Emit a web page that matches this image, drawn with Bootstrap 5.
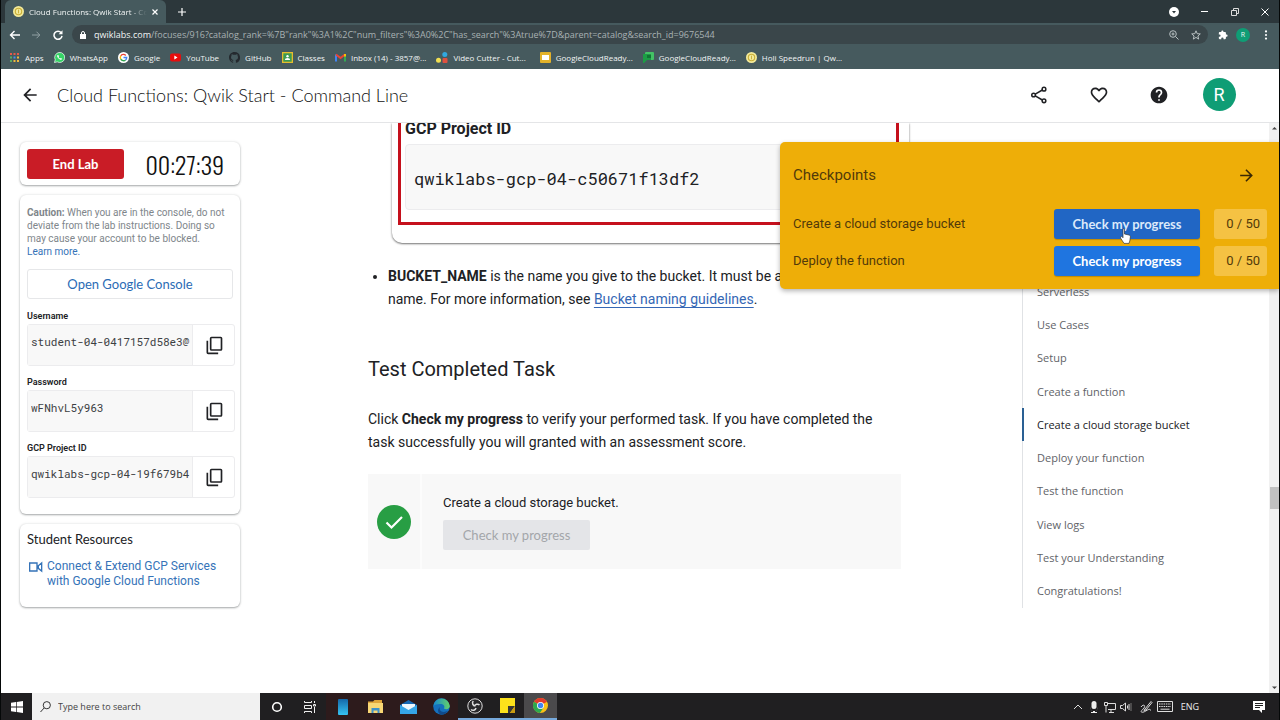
<!DOCTYPE html>
<html lang="en">
<head>
<meta charset="utf-8">
<meta name="viewport" content="width=device-width, initial-scale=1">
<title>Cloud Functions: Qwik Start - Command Line</title>
<link href="https://cdn.jsdelivr.net/npm/bootstrap@5.3.0/dist/css/bootstrap.min.css" rel="stylesheet">
<style>
:root{--ui:"Open Sans","Noto Sans",sans-serif;--brand:Lato,"Open Sans",sans-serif;--mono:"Roboto Mono","Liberation Mono",monospace}
body{font-family:Roboto,sans-serif;font-size:14px;color:#202124;background:#fff}
svg{display:block;flex:none}
button{border:0;background:none;padding:0;color:inherit}
.screen{border:solid #050808;border-width:0 1px}
/* browser window */
.chrome-ui{font-family:var(--ui);font-size:8px;line-height:12px;color:#f1f4f4}
.tabstrip{height:23px;background:#2c373b}
.tab{width:161px;height:23px;margin-left:4px;padding:0 8px;background:#465a5e;border-radius:6px 6px 0 0}
.tab-label{width:0;margin:0 5px;-webkit-mask-image:linear-gradient(90deg,#000 85%,transparent);mask-image:linear-gradient(90deg,#000 85%,transparent)}
.window-buttons{gap:22px;margin-right:10px}
.toolbar{height:23px;background:#465a5e;padding:0 9px 0 8px}
.omnibox{height:19px;border-radius:10px;background:#3a464a;padding:0 7px 0 8px;margin:0 10px 0 9px}
.omnibox input{font:9px/12px var(--ui);color:#a9b2b4;background:none;border:0;padding:0;min-width:0}
.omnibox .host{font-size:9px}
.bookmarks{height:23px;background:#465a5e;padding-left:8px;gap:10px}
.bookmarks a{color:#f1f4f4;gap:5px}
.pill{width:14px;height:14px;background:#0f9d75;font-size:7px}
/* page header */
.lab-header{height:54px;border-bottom:1px solid #e4e5e7;padding:0 30px 2px 19px}
.lab-header h1{font:300 18px/24px var(--brand);margin:0 0 0 17px;color:#111}
.lab-header .tool{width:60px}
.avatar{width:33px;height:33px;background:#0f9d75;font-size:18px}
/* side panels */
.side{width:220px;margin:19px 0 0 19px;gap:10px}
.panel{border-radius:6px;background:#fff;box-shadow:0 1px 2px rgba(60,64,67,.42),0 0 3px rgba(60,64,67,.14);padding:7px 7px 6px}
.end-lab{width:97px;height:30px;border-radius:3px;background:#c91c26;color:#fff;font:700 13px/16px var(--brand)}
.timer{font:300 24px/28px Oswald,"Roboto Condensed",sans-serif;color:#111;margin-right:9px}
.caution{font-size:10px;line-height:13px;color:#80868b;margin:4px 0 11px}
.blue-link{color:#3573b8;text-decoration:none}
.console-btn{height:30px;border:1px solid #e6e7e9;border-radius:3px;color:#2b6cb5;font:400 13px/16px var(--brand)}
.cred{margin-right:-2px;padding-top:3px}
.cred label{font-size:9px;line-height:12px;font-weight:600;margin-bottom:2px;display:block}
.cred-box{height:42px;border:1px solid #ececee;border-radius:3px;margin-bottom:10px}
.cred-box input{font:11px/16px var(--mono);color:#3c4043;background:#f8f8f8;border:0;border-right:1px solid #ececee;padding:0 2px 6px 3px;min-width:0}
.cred-box button{width:41px}
.resources{font-size:12px;line-height:15px;padding-bottom:18px}
.resources h2{font:400 13px/16px var(--brand);margin:0 0 12px}
/* article */
.article{width:533px;margin-left:128px}
.shot{margin:0 -8px 22px 24px;height:120px;padding:0 10px 18px 6px;border-radius:0 0 10px 10px;box-shadow:0 1px 2px rgba(0,0,0,.5),0 0 3px rgba(0,0,0,.14)}
.shot-frame{height:102px;border:solid #c5101c;border-width:0 3px 3px;padding:0 4px}
.shot-frame strong{font-size:16px;line-height:12px;height:21px;display:block}
.shot-field{height:66px;border:1px solid #ececee;border-radius:4px;background:#f8f8f8;font:17px/68px var(--mono);padding-left:8px}
.copy{line-height:23px}
.copy ul{padding-left:20px;margin-bottom:46px}
.copy h2{font-size:20px;line-height:24px;font-weight:400;margin-bottom:27px}
.copy p{margin-bottom:20px}
.copy ul a{color:#3567b5;text-underline-offset:3px;text-decoration-thickness:1px}
.task{height:95px;background:#f8f8f8;line-height:18px;font-size:13px}
.task-state{width:54px;border-right:2px solid #fcfcfc}
.task-body{padding:20px 21px 0}
.task-body .off{width:147px;height:30px;border-radius:2px;background:#e4e5e8;color:#a3a6aa;font:400 13px/16px var(--brand);margin-top:8px}
/* table of contents */
.toc{width:247px;margin-top:152px}
.toc ul{height:333px;border-left:1px solid #e0e2e5}
.toc a{color:#5f6368;font:500 11px/16px "Open Sans",sans-serif;text-decoration:none;padding-left:14px;margin-left:-1px;border-left:1px solid transparent}
.toc a.here{color:#202124;border-left:2px solid #2a6094;padding-left:13px}
.scroll{width:10px;background:#f1f1f1}
.scroll .above{flex:67}
.scroll .below{flex:33}
.scroll .thumb{height:22px;background:#c1c1c1;margin-left:1px}
/* checkpoints drawer */
.drawer{width:499px;top:19px;background:#eeae08;border-radius:5px 0 0 5px;padding:21px 12px 13px 13px;color:#523a0a;box-shadow:0 2px 5px rgba(0,0,0,.3);font-size:13px}
.drawer h2{font-size:15px;line-height:24px;margin:0}
.drawer-head{padding-right:11px;margin-bottom:22px}
.drawer li{height:30px;margin-bottom:7px}
.drawer li:last-child{margin-bottom:0}
.check{width:146px;height:30px;border-radius:3px;background:#1f75e0;color:#fff;font:700 13px/16px var(--brand);box-shadow:0 1px 1px rgba(0,0,0,.2)}
.check.hot{background:#2166c4;color:#dce9fa}
.score{width:53px;height:30px;border-radius:3px;background:#f5c243;margin-left:14px;padding-right:7px}
.hand{left:66px;top:19px}
/* taskbar */
.taskbar{height:27px;background:#201f21;font-family:var(--ui)}
.taskbar .cell{width:33px;height:27px}
.taskbar .start{width:31px}
.taskbar .running{border-bottom:2px solid #76a9dc}
.taskbar .active{background:#4b4a4c}
.find{width:228px;background:#f1f1f1;gap:7px;padding-left:8px;color:#333}
.find input{font:9px/14px var(--ui);border:0;background:none;padding:0;min-width:0}
.find input::placeholder{color:#444}
.apps{background:#2d1b1c}
.tray{gap:4px;margin-right:14px;font-size:9px;color:#eee}
.tray .notes{margin-left:50px}
</style>
</head>
<body>
<div class="screen vh-100 d-flex flex-column overflow-hidden">

<header class="chrome-ui">
  <div class="tabstrip d-flex align-items-center">
    <div class="tab d-flex align-items-center">
      <svg width="11" height="11" viewBox="0 0 12 12"><circle cx="6" cy="6" r="6" fill="#f3ea9b"/><circle cx="6" cy="6" r="3.5" fill="none" stroke="#c9ae35" stroke-width="1.2"/><path d="M6 4v4" stroke="#c9ae35"/></svg>
      <span class="tab-label flex-fill text-nowrap overflow-hidden">Cloud Functions: Qwik Start - Comm</span>
      <button aria-label="Close tab"><svg width="6" height="6" viewBox="0 0 6 6" stroke="#fff" stroke-width="1.2"><path d="M.5.5l5 5M5.5.5l-5 5"/></svg></button>
    </div>
    <button class="ms-2 ps-1" aria-label="New tab"><svg width="8" height="8" viewBox="0 0 8 8" stroke="#fff" stroke-width="1.2"><path d="M4 0v8M0 4h8"/></svg></button>
    <div class="window-buttons ms-auto d-flex align-items-center">
      <svg width="10" height="10" viewBox="0 0 10 10"><circle cx="5" cy="5" r="5" fill="#fff"/><path d="M3 4h4L5 6.5z" fill="#2c373b"/></svg>
      <button aria-label="Minimize"><svg width="8" height="8" viewBox="0 0 8 8"><path d="M0 3.500h7" stroke="#fff"/></svg></button>
      <button aria-label="Restore"><svg width="8" height="8" viewBox="0 0 8 8" fill="none" stroke="#ddd"><path d="M.5 2.500h5v5h-5zM2.500 2V.5h5v5H6"/></svg></button>
      <button aria-label="Close"><svg width="8" height="8" viewBox="0 0 8 8" stroke="#fff"><path d="M.5.5l7 7M7.500.5l-7 7"/></svg></button>
    </div>
  </div>
  <div class="toolbar d-flex align-items-center">
    <button aria-label="Back"><svg width="11" height="10" viewBox="0 0 11 10" fill="none" stroke="#fff" stroke-width="1.400"><path d="M11 5H1.500M5.500 1l-4 4 4 4"/></svg></button>
    <button class="mx-2 px-1" aria-label="Forward"><svg width="9" height="10" viewBox="0 0 11 10" fill="none" stroke="#93a1a4" stroke-width="1.200"><path d="M0 5h9.500M5.500 1l4 4-4 4"/></svg></button>
    <button aria-label="Reload"><svg width="10" height="10" viewBox="0 0 10 10"><path d="M8.200 2.800A4 4 0 1 0 9 5.800" fill="none" stroke="#fff" stroke-width="1.500"/><path d="M9.500.3v3.900H5.600z" fill="#fff"/></svg></button>
    <div class="omnibox d-flex align-items-center flex-fill">
      <svg class="me-2" width="6" height="8" viewBox="0 0 6 8"><path d="M0 3h6v5H0z" fill="#fff"/><path d="M1.500 3V2a1.500 1.500 0 0 1 3 0v1" fill="none" stroke="#fff"/></svg>
      <label class="host" for="url">qwiklabs.com</label>
      <input id="url" class="flex-fill" value="/focuses/916?catalog_rank=%7B&quot;rank&quot;%3A1%2C&quot;num_filters&quot;%3A0%2C&quot;has_search&quot;%3Atrue%7D&amp;parent=catalog&amp;search_id=9676544">
      <svg width="10" height="10" viewBox="0 0 10 10" fill="none" stroke="#b8c1c3"><circle cx="4" cy="4" r="3.300"/><path d="M6.500 6.500L9.500 9.500M2.500 4h3M4 2.500v3"/></svg>
      <svg class="ms-2 ps-1" width="14" height="10" viewBox="0 0 10 10" fill="none" stroke="#c4cccd" stroke-width=".9"><path d="M5 .8l1.200 2.900 3.100.2L6.900 6l.8 3.100L5 7.400 2.300 9.100 3.100 6 .7 3.900l3.100-.2z"/></svg>
    </div>
    <svg width="10" height="10" viewBox="0 0 24 24" fill="#fff"><path d="M20.500 11H19V7a2 2 0 0 0-2-2h-4V3.500a2.500 2.500 0 0 0-5 0V5H4a2 2 0 0 0-2 2v3.800h1.500a2.700 2.700 0 0 1 0 5.400H2V20a2 2 0 0 0 2 2h3.800v-1.500a2.700 2.700 0 0 1 5.400 0V22H17a2 2 0 0 0 2-2v-4h1.500a2.500 2.500 0 0 0 0-5z"/></svg>
    <span class="pill rounded-circle d-flex align-items-center justify-content-center mx-2">R</span>
    <svg class="ms-1" width="8" height="10" viewBox="0 0 8 10" fill="#fff"><circle cx="4" cy="1.400" r="1.100"/><circle cx="4" cy="5" r="1.100"/><circle cx="4" cy="8.600" r="1.100"/></svg>
  </div>
  <nav class="bookmarks d-flex align-items-center text-nowrap" aria-label="Bookmarks">
    <a class="d-flex align-items-center text-decoration-none" href="#"><svg width="11" height="11" viewBox="0 0 11 11"><path fill="#e8594a" d="M1 1h2v2H1zM4.500 1h2v2h-2zM8 1h2v2H8z"/><path fill="#58ad62" d="M1 4.500h2v2H1z"/><path fill="#4d8ff0" d="M4.500 4.500h2v2h-2z"/><path fill="#f0b93d" d="M8 4.500h2v2H8zM4.500 8h2v2h-2zM8 8h2v2H8z"/><path fill="#58ad62" d="M1 8h2v2H1z"/></svg>Apps</a>
    <a class="d-flex align-items-center text-decoration-none" href="#"><svg width="11" height="11" viewBox="0 0 24 24"><path d="M1 23l1.700-6A11 11 0 1 1 7 21.500z" fill="#35d366" stroke="#fff" stroke-width="1.500"/><path d="M8 6.500c-2 1.500-1.500 4 1.500 7.200s6 4.300 8 2.300l.3-1.500-3-1.500-1.300 1.400c-2-1-3-2-3.700-3.600L11 9.700 9.500 6.500z" fill="#fff"/></svg>WhatsApp</a>
    <a class="d-flex align-items-center text-decoration-none" href="#"><svg width="11" height="11" viewBox="0 0 24 24" fill="none" stroke-width="3"><circle cx="12" cy="12" r="12" fill="#fff"/><path d="M17 7.500a7 7 0 0 0-11 1" stroke="#ea4335"/><path d="M6 8.500a7 7 0 0 0 0 7" stroke="#fbbc05"/><path d="M6 15.500a7 7 0 0 0 10.500 2" stroke="#34a853"/><path d="M16.500 17.500A7 7 0 0 0 19 12h-7" stroke="#4285f4"/></svg>Google</a>
    <a class="d-flex align-items-center text-decoration-none" href="#"><svg width="11" height="11" viewBox="0 0 11 11"><rect y="1.500" width="11" height="8" rx="2" fill="#e60d0d"/><path d="M4.300 3.600v3.800L7.500 5.500z" fill="#fff"/></svg>YouTube</a>
    <a class="d-flex align-items-center text-decoration-none" href="#"><svg width="11" height="11" viewBox="0 0 16 16" fill="#24292e"><path d="M8 0C3.580 0 0 3.580 0 8c0 3.540 2.290 6.530 5.470 7.590.4.070.55-.17.55-.38v-1.490c-2.010.37-2.530-.49-2.690-.94-.09-.23-.48-.94-.82-1.130-.28-.15-.68-.52-.01-.53.63-.01 1.080.58 1.230.82.72 1.210 1.870.87 2.330.66.07-.52.28-.87.51-1.070-1.780-.2-3.640-.89-3.640-3.950 0-.87.31-1.590.82-2.150-.08-.2-.36-1.020.08-2.120 0 0 .67-.21 2.200.82a7.600 7.600 0 0 1 4 0c1.530-1.040 2.200-.82 2.200-.82.44 1.100.16 1.920.08 2.120.51.56.82 1.270.82 2.150 0 3.070-1.870 3.750-3.650 3.950.29.25.54.73.54 1.480v2.190c0 .21.15.46.55.38A8 8 0 0 0 8 0z"/></svg>GitHub</a>
    <a class="d-flex align-items-center text-decoration-none" href="#"><svg width="11" height="11" viewBox="0 0 11 11"><path fill="#e5bd2c" d="M0 0h11v11H0z"/><path fill="#3c9a50" d="M1.300 1.300h8.400v8.400H1.300z"/><circle cx="5.500" cy="4.200" r="1.200" fill="#fff"/><path d="M2.800 8a2.700 1.900 0 0 1 5.400 0z" fill="#fff"/></svg>Classes</a>
    <a class="d-flex align-items-center text-decoration-none" href="#"><svg width="11" height="11" viewBox="0 0 11 11" fill="none" stroke-width="2"><path d="M1 9.500v-7" stroke="#4285f4"/><path d="M10 9.500v-7" stroke="#34a853"/><path d="M1 2.500L5.500 6 10 2.500" stroke="#ea4335"/><path d="M10 2v2.500" stroke="#fbbc05"/></svg>Inbox (14) - 3857@...</a>
    <a class="d-flex align-items-center text-decoration-none" href="#"><svg width="12" height="11" viewBox="0 0 12 11"><circle cx="8.800" cy="2.500" r="2.500" fill="#31a8e0"/><circle cx="2.500" cy="8.200" r="2.500" fill="#f1df52"/><rect x="6.500" y="6" width="5" height="5" rx="1" fill="#df5140"/></svg>Video Cutter - Cut...</a>
    <a class="d-flex align-items-center text-decoration-none ms-1" href="#"><svg width="11" height="11" viewBox="0 0 11 11"><rect width="11" height="11" rx="1" fill="#e3b22a"/><path fill="#fff" d="M2 3h7v5H2z"/></svg>GoogleCloudReady...</a>
    <a class="d-flex align-items-center text-decoration-none" href="#"><svg width="11" height="11" viewBox="0 0 11 11"><rect x="2" width="9" height="8" rx="1" fill="#43c265"/><path d="M0 2h8v6H4l-3 3H0z" fill="#1c9c45"/><path d="M4 3h4v3H4z" fill="#107434"/></svg>GoogleCloudReady...</a>
    <a class="d-flex align-items-center text-decoration-none" href="#"><svg width="11" height="11" viewBox="0 0 12 12"><circle cx="6" cy="6" r="6" fill="#f3ea9b"/><circle cx="6" cy="6" r="3.500" fill="none" stroke="#c9ae35" stroke-width="1.200"/><path d="M6 4v4" stroke="#c9ae35"/></svg>Holi Speedrun | Qw...</a>
  </nav>
</header>

<header class="lab-header d-flex align-items-center">
  <button aria-label="Back to catalog"><svg width="20" height="20" viewBox="0 0 24 24"><path d="M20 11H7.830l5.590-5.590L12 4l-8 8 8 8 1.410-1.410L7.830 13H20z" fill="#202124"/></svg></button>
  <h1>Cloud Functions: Qwik Start - Command Line</h1>
  <div class="ms-auto d-flex align-items-center">
    <button class="tool d-flex justify-content-center" aria-label="Share"><svg width="20" height="20" viewBox="0 0 24 24" fill="none" stroke="#202124" stroke-width="1.800"><circle cx="18" cy="5" r="2.200"/><circle cx="5.500" cy="12" r="2.200"/><circle cx="18" cy="19" r="2.200"/><path d="M7.500 11L16 6M7.500 13L16 18"/></svg></button>
    <button class="tool d-flex justify-content-center" aria-label="Favorite"><svg width="20" height="20" viewBox="0 0 24 24" fill="#202124"><path d="M16.500 3c-1.740 0-3.410.81-4.500 2.090C10.910 3.810 9.240 3 7.500 3 4.420 3 2 5.420 2 8.500c0 3.780 3.400 6.860 8.550 11.540L12 21.350l1.450-1.320C18.600 15.360 22 12.280 22 8.500 22 5.420 19.580 3 16.500 3zm-4.400 15.550l-.1.100-.1-.1C7.140 14.240 4 11.390 4 8.500 4 6.500 5.500 5 7.500 5c1.540 0 3.040.99 3.570 2.360h1.870C13.460 5.990 14.960 5 16.500 5c2 0 3.500 1.500 3.500 3.500 0 2.890-3.140 5.740-7.900 10.050z"/></svg></button>
    <button class="tool d-flex justify-content-center" aria-label="Help"><svg width="20" height="20" viewBox="0 0 24 24" fill="#202124"><path d="M12 2C6.480 2 2 6.480 2 12s4.480 10 10 10 10-4.480 10-10S17.520 2 12 2zm1 17h-2v-2h2v2zm2.070-7.750l-.9.920C13.450 12.900 13 13.500 13 15h-2v-.5c0-1.100.45-2.100 1.170-2.830l1.240-1.260c.37-.36.59-.86.59-1.410a2 2 0 0 0-4 0H8a4 4 0 0 1 8 0c0 .88-.36 1.680-.93 2.250z"/></svg></button>
    <button class="tool d-flex justify-content-center" aria-label="Account"><span class="avatar rounded-circle text-white d-flex align-items-center justify-content-center">R</span></button>
  </div>
</header>

<div class="d-flex flex-fill position-relative overflow-hidden">
  <aside class="side flex-shrink-0 d-flex flex-column">
    <section class="panel d-flex align-items-center justify-content-between">
      <button class="end-lab">End Lab</button><span class="timer">00:27:39</span>
    </section>
    <section class="panel">
      <p class="caution"><b>Caution:</b> When you are in the console, do not deviate from the lab instructions. Doing so may cause your account to be blocked. <br><a class="blue-link" href="#">Learn more.</a></p>
      <button class="console-btn w-100 mb-2">Open Google Console</button>
      <div class="cred">
        <label for="user">Username</label>
        <div class="cred-box d-flex"><input id="user" class="flex-fill" readonly value="student-04-0417157d58e3@"><button class="d-flex align-items-center justify-content-center" aria-label="Copy username"><svg width="20" height="20" viewBox="0 0 24 24"><path d="M20 2H9a2 2 0 0 0-2 2v13a2 2 0 0 0 2 2h11a2 2 0 0 0 2-2V4a2 2 0 0 0-2-2zm0 15H9V4h11zM3 7v14a2 2 0 0 0 2 2h12v-2H5V7z" fill="#202124"/></svg></button></div>
        <label for="pass">Password</label>
        <div class="cred-box d-flex"><input id="pass" class="flex-fill" readonly value="wFNhvL5y963"><button class="d-flex align-items-center justify-content-center" aria-label="Copy password"><svg width="20" height="20" viewBox="0 0 24 24"><path d="M20 2H9a2 2 0 0 0-2 2v13a2 2 0 0 0 2 2h11a2 2 0 0 0 2-2V4a2 2 0 0 0-2-2zm0 15H9V4h11zM3 7v14a2 2 0 0 0 2 2h12v-2H5V7z" fill="#202124"/></svg></button></div>
        <label for="proj">GCP Project ID</label>
        <div class="cred-box d-flex"><input id="proj" class="flex-fill" readonly value="qwiklabs-gcp-04-19f679b4"><button class="d-flex align-items-center justify-content-center" aria-label="Copy project ID"><svg width="20" height="20" viewBox="0 0 24 24"><path d="M20 2H9a2 2 0 0 0-2 2v13a2 2 0 0 0 2 2h11a2 2 0 0 0 2-2V4a2 2 0 0 0-2-2zm0 15H9V4h11zM3 7v14a2 2 0 0 0 2 2h12v-2H5V7z" fill="#202124"/></svg></button></div>
      </div>
    </section>
    <section class="panel resources">
      <h2>Student Resources</h2>
      <a class="blue-link d-flex" href="#"><svg class="me-1" width="16" height="16" viewBox="0 0 24 24"><path d="M15 6v12H4V6zM17 10l5-4v12l-5-4z" fill="none" stroke="#3573b8" stroke-width="2"/></svg>Connect &amp; Extend GCP Services with Google Cloud Functions</a>
    </section>
  </aside>

  <main class="article flex-shrink-0">
    <div class="shot"><div class="shot-frame"><strong>GCP Project ID</strong><div class="shot-field">qwiklabs-gcp-04-c50671f13df2</div></div></div>
    <div class="copy">
      <ul><li><strong>BUCKET_NAME</strong> is the name you give to the bucket. It must be a globally unique name. For more information, see <a href="#">Bucket naming guidelines</a>.</li></ul>
      <h2>Test Completed Task</h2>
      <p>Click <strong>Check my progress</strong> to verify your performed task. If you have completed the task successfully you will granted with an assessment score.</p>
    </div>
    <section class="task d-flex">
      <div class="task-state d-flex align-items-center justify-content-center"><svg width="34" height="34" viewBox="0 0 34 34"><circle cx="17" cy="17" r="17" fill="#289e44"/><path d="M9.500 17.500l5 5L25 12" fill="none" stroke="#fff" stroke-width="2.200"/></svg></div>
      <div class="task-body"><div>Create a cloud storage bucket.</div><button class="off" disabled>Check my progress</button></div>
    </section>
  </main>

  <nav class="toc flex-shrink-0 ms-auto" aria-label="Contents">
    <ul class="list-unstyled d-flex flex-column m-0">
      <li class="flex-fill d-flex"><a class="d-flex align-items-center" href="#">Serverless</a></li>
      <li class="flex-fill d-flex"><a class="d-flex align-items-center" href="#">Use Cases</a></li>
      <li class="flex-fill d-flex"><a class="d-flex align-items-center" href="#">Setup</a></li>
      <li class="flex-fill d-flex"><a class="d-flex align-items-center" href="#">Create a function</a></li>
      <li class="flex-fill d-flex"><a class="d-flex align-items-center here" href="#">Create a cloud storage bucket</a></li>
      <li class="flex-fill d-flex"><a class="d-flex align-items-center" href="#">Deploy your function</a></li>
      <li class="flex-fill d-flex"><a class="d-flex align-items-center" href="#">Test the function</a></li>
      <li class="flex-fill d-flex"><a class="d-flex align-items-center" href="#">View logs</a></li>
      <li class="flex-fill d-flex"><a class="d-flex align-items-center" href="#">Test your Understanding</a></li>
      <li class="flex-fill d-flex"><a class="d-flex align-items-center" href="#">Congratulations!</a></li>
    </ul>
  </nav>
  <div class="scroll flex-shrink-0 d-flex flex-column" aria-hidden="true">
    <svg width="10" height="10" viewBox="0 0 10 10"><path d="M3 6.500h5L5.500 4z" fill="#444"/></svg>
    <div class="above"></div><div class="thumb"></div><div class="below"></div>
    <svg width="10" height="10" viewBox="0 0 10 10"><path d="M3 3.500h5L5.500 6z" fill="#444"/></svg>
  </div>

  <section class="drawer position-absolute end-0">
    <div class="drawer-head d-flex align-items-center justify-content-between">
      <h2 class="fw-normal">Checkpoints</h2>
      <button aria-label="Hide checkpoints"><svg width="19" height="19" viewBox="0 0 24 24"><path d="M12 4l-1.410 1.410L16.170 11H4v2h12.170l-5.580 5.590L12 20l8-8z" fill="#3a2904"/></svg></button>
    </div>
    <ul class="list-unstyled m-0">
      <li class="d-flex align-items-center"><span class="me-auto">Create a cloud storage bucket</span><button class="check hot position-relative">Check my progress<svg class="hand position-absolute" width="11" height="16" viewBox="0 0 11 16"><path d="M3 1.500c0-1 1.500-1 1.500 0V6l4.500 1c1 .3 1.500 1 1.400 2L9.800 13 9 15.400H4L1 10.800C.4 9.800.2 9 1 8.700s1.400.2 2 1z" fill="#fff" stroke="#333" stroke-width=".7"/></svg></button><span class="score d-flex align-items-center justify-content-end">0 / 50</span></li>
      <li class="d-flex align-items-center"><span class="me-auto">Deploy the function</span><button class="check">Check my progress</button><span class="score d-flex align-items-center justify-content-end">0 / 50</span></li>
    </ul>
  </section>
</div>

<footer class="taskbar d-flex flex-shrink-0">
  <button class="cell start d-flex align-items-center justify-content-center" aria-label="Start"><svg width="12" height="12" viewBox="0 0 12 12" fill="#fff"><path d="M0 1.700L5 1v4.600H0zM5.700.9L12 0v5.600H5.700zM0 6.400h5V11l-5-.7zM5.700 6.400H12V12l-6.300-.9z"/></svg></button>
  <div class="find d-flex align-items-center"><svg width="11" height="12" viewBox="0 0 11 12" fill="none" stroke="#333"><circle cx="6.800" cy="4.200" r="3.600"/><path d="M4.200 6.900L.5 11"/></svg><input id="find" class="flex-fill" aria-label="Search" placeholder="Type here to search"></div>
  <button class="cell d-flex align-items-center justify-content-center" aria-label="Cortana"><svg width="12" height="12" viewBox="0 0 12 12"><circle cx="6" cy="6" r="4.300" fill="none" stroke="#fff" stroke-width="1.600"/></svg></button>
  <button class="cell d-flex align-items-center justify-content-center" aria-label="Task view"><svg width="12" height="12" viewBox="0 0 12 12" fill="none" stroke="#eee"><path d="M.5 0v1.500h7V0M.5 4.500h7v3h-7zM.5 12v-1.500h7V12M10.500 0v2M10.500 6v6M9.500 3.500h2v1.500h-2z"/></svg></button>
  <div class="apps d-flex">
    <button class="cell d-flex align-items-center justify-content-center" aria-label="Your Phone"><svg width="10" height="16" viewBox="0 0 10 16"><defs><linearGradient id="ph" x2="0" y2="1"><stop stop-color="#1467a8"/><stop offset="1" stop-color="#36c3f2"/></linearGradient></defs><rect width="10" height="16" rx="1" fill="url(#ph)"/></svg></button>
    <button class="cell d-flex align-items-center justify-content-center" aria-label="File Explorer"><svg width="15" height="13" viewBox="0 0 15 13"><path d="M0 1.500h5L6.500 0H14v12H0z" fill="#dfa53a"/><path d="M0 3h15v10H0z" fill="#f8d775"/><path d="M3.500 13V8h8v5H9.500v-2.500h-4V13z" fill="#3f93c9"/></svg></button>
    <button class="cell d-flex align-items-center justify-content-center" aria-label="Mail"><svg width="17" height="14" viewBox="0 0 17 14"><path d="M0 5L8.500 0 17 5v9H0z" fill="#1668b3"/><path d="M2 4h13v6H2z" fill="#eef7fd"/><path d="M0 5l8.500 5L17 5v9H0z" fill="#35a6e8"/></svg></button>
    <button class="cell d-flex align-items-center justify-content-center" aria-label="Edge"><svg width="17" height="17" viewBox="0 0 17 17"><defs><linearGradient id="ed"><stop stop-color="#1689d0"/><stop offset="1" stop-color="#65d267"/></linearGradient></defs><circle cx="8.500" cy="8.500" r="8.300" fill="#1570bd"/><path d="M.3 8A8.300 8.300 0 0 1 16.800 8c0 3-3.500 4-6 2.500 1.500-2 0-4.500-3-4.500C5 5.800 1.500 6.500.3 8z" fill="url(#ed)"/><path d="M7 9c-1.500 3 1.500 6 6 4.500l2.200-.5c-2 2.500-4 3.600-6.500 3.800C4.500 16 4 11 7 9z" fill="#104b8c"/></svg></button>
  </div>
  <button class="cell running d-flex align-items-center justify-content-center" aria-label="OBS Studio"><svg width="16" height="16" viewBox="0 0 16 16"><circle cx="8" cy="8" r="7.200" fill="#28282a" stroke="#ddd"/><path d="M6.300 3a3 3 0 0 0 2 5M12.500 7a3 3 0 0 0-5 1.500M4 11.500a3 3 0 0 0 5-1.500" fill="none" stroke="#ddd" stroke-width="1.500"/></svg></button>
  <button class="cell running d-flex align-items-center justify-content-center" aria-label="Sticky Notes"><svg width="15" height="15" viewBox="0 0 15 15"><path d="M0 0h15v15H0z" fill="#fde21b"/><path d="M8 8h7l-5 7H8z" fill="#3a3934"/><path d="M15 8v7h-5z" fill="#c99b12"/></svg></button>
  <button class="cell running active d-flex align-items-center justify-content-center" aria-label="Chrome"><svg width="15" height="15" viewBox="0 0 24 24"><circle cx="12" cy="12" r="12" fill="#fbc116"/><path d="M12 12L1.600 6A12 12 0 0 1 22.400 6z" fill="#e33b2e"/><path d="M12 12L1.600 6A12 12 0 0 0 11 24l6-9z" fill="#2da94f"/><circle cx="12" cy="12" r="5.600" fill="#fff"/><circle cx="12" cy="12" r="4.300" fill="#4285f4"/></svg></button>
  <div class="tray d-flex align-items-center ms-auto">
    <svg width="12" height="12" viewBox="0 0 12 12" fill="none" stroke="#ddd"><path d="M2 8l4-4 4 4"/></svg>
    <svg width="12" height="12" viewBox="0 0 12 12" fill="#eee"><rect x="3.500" width="5" height="8" rx="2.500"/><path d="M2 6a4 4 0 0 0 8 0v1.500A4 4 0 0 1 7 10v1h2v1H3v-1h2v-1a4 4 0 0 1-3-2.500z"/></svg>
    <svg width="12" height="12" viewBox="0 0 12 12" fill="none" stroke="#ddd"><path d="M4 2.500h7.500v6H4M7 8.500V11M5 11.500h5M.5 1.500h3v3h-3zM2 4.500v7"/></svg>
    <svg width="12" height="12" viewBox="0 0 12 12" fill="none" stroke="#ddd"><path d="M.5 4.500h2l3-2.500v8l-3-2.500h-2zM7.500 4.500v3M9 3v6"/><path d="M11 2v8" stroke="#777"/></svg>
    <svg class="ms-1" width="13" height="13" viewBox="0 0 13 13" fill="none" stroke="#ddd"><path d="M5 9L11 1.500l1 1L6 10l-2 .5zM1 7c2-3 5-2 3 1s-4 3-2.500 4 4-1 6-2 3-1 3 .5"/></svg>
    <svg class="me-1" width="16" height="11" viewBox="0 0 16 11" fill="none" stroke="#ddd"><path d="M.5.5h15v10H.5z"/><path d="M2 3h12M2 5.500h12" stroke-dasharray="1.500 .8"/><path d="M3.500 8.200h9"/></svg>
    <span>ENG</span>
    <svg class="notes" width="12" height="12" viewBox="0 0 12 12"><path d="M0 0h12v9H9v3L6 9H0z" fill="#fff"/><path d="M2 2.500h8M2 4.500h8M2 6.500h5" stroke="#222"/></svg>
  </div>
</footer>
</div>
<script src="https://cdn.jsdelivr.net/npm/bootstrap@5.3.0/dist/js/bootstrap.bundle.min.js"></script>
</body>
</html>
